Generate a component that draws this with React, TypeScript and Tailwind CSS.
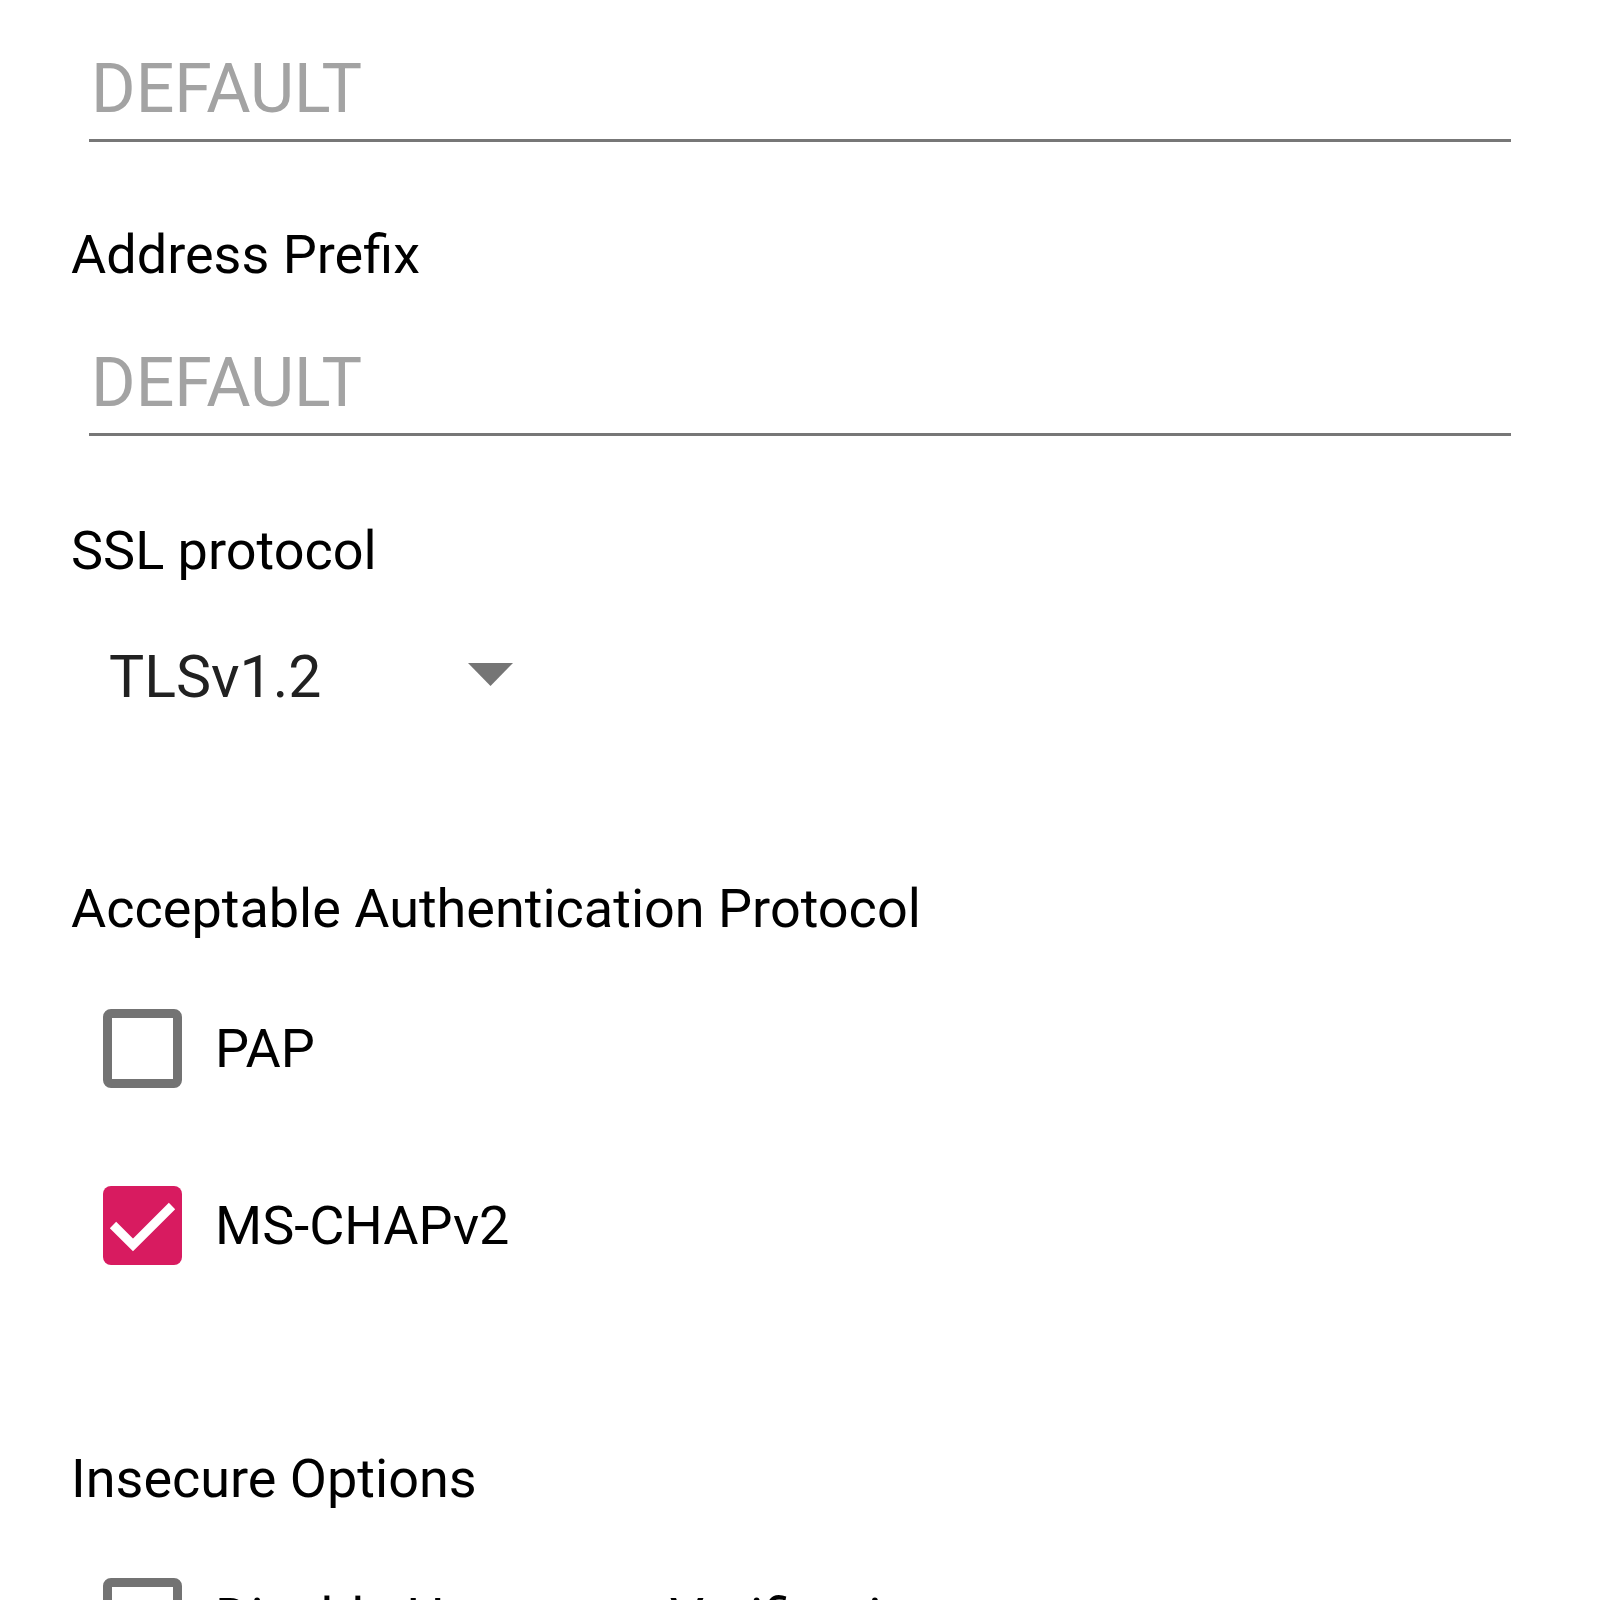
import React from "react"

type CheckProps = { label: string; checked?: boolean; className?: string }

function Checkbox({ label, checked, className = "" }: CheckProps) {
  return (
    <div className={`flex items-center ${className}`}>
      {checked ? (
        <div className="ml-[32px] flex h-[79px] w-[79px] shrink-0 items-center justify-center rounded-[8px] bg-[#d81b60]">
          <svg width="79" height="79" viewBox="0 0 79 79">
            <polyline points="10,39 30,59 69,20" fill="none" stroke="#ffffff" strokeWidth="9" />
          </svg>
        </div>
      ) : (
        <div className="ml-[32px] h-[79px] w-[79px] shrink-0 rounded-[8px] border-[9px] border-[#737373]" />
      )}
      <span className="ml-[33px] text-[54px] leading-[54px] text-black">{label}</span>
    </div>
  )
}

function Field({ hint, className = "" }: { hint: string; className?: string }) {
  return (
    <div className={`ml-[18px] border-b-[3px] border-[#777777] pb-[16px] ${className}`}>
      <div className="pl-[2px] text-[68px] leading-[68px] text-[#a3a3a3]">{hint}</div>
    </div>
  )
}

function Label({ text, className = "" }: { text: string; className?: string }) {
  return <div className={`text-[54px] leading-[54px] text-black ${className}`}>{text}</div>
}

export default function App() {
  return (
    <div
      className="h-[1600px] w-[1600px] overflow-hidden bg-white"
      style={{ fontFamily: "Roboto, 'Noto Sans', sans-serif" }}
    >
      <div className="flex flex-col pl-[71px] pr-[89px]">
        <Field hint="DEFAULT" className="mt-[55px]" />

        <Label text="Address Prefix" className="mt-[86px]" />
        <Field hint="DEFAULT" className="mt-[67px]" />

        <Label text="SSL protocol" className="mt-[88px]" />
        <div className="mt-[69px] flex w-[442px] items-center pl-[38px]">
          <span className="text-[59px] leading-[59px] text-[#212121]">TLSv1.2</span>
          <svg className="ml-auto -mt-[4px]" width="45" height="23" viewBox="0 0 45 23">
            <polygon points="0,0 45,0 22.5,23" fill="#757575" />
          </svg>
        </div>

        <Label text="Acceptable Authentication Protocol" className="mt-[176px]" />
        <Checkbox label="PAP" className="mt-[73px]" />
        <Checkbox label="MS-CHAPv2" checked className="mt-[98px]" />

        <Label text="Insecure Options" className="mt-[187px]" />
        <Checkbox label="Disable Hostname Verification" className="mt-[72px]" />
        <Checkbox label="Accept Any Certificate" className="mt-[98px]" />
      </div>
    </div>
  )
}
